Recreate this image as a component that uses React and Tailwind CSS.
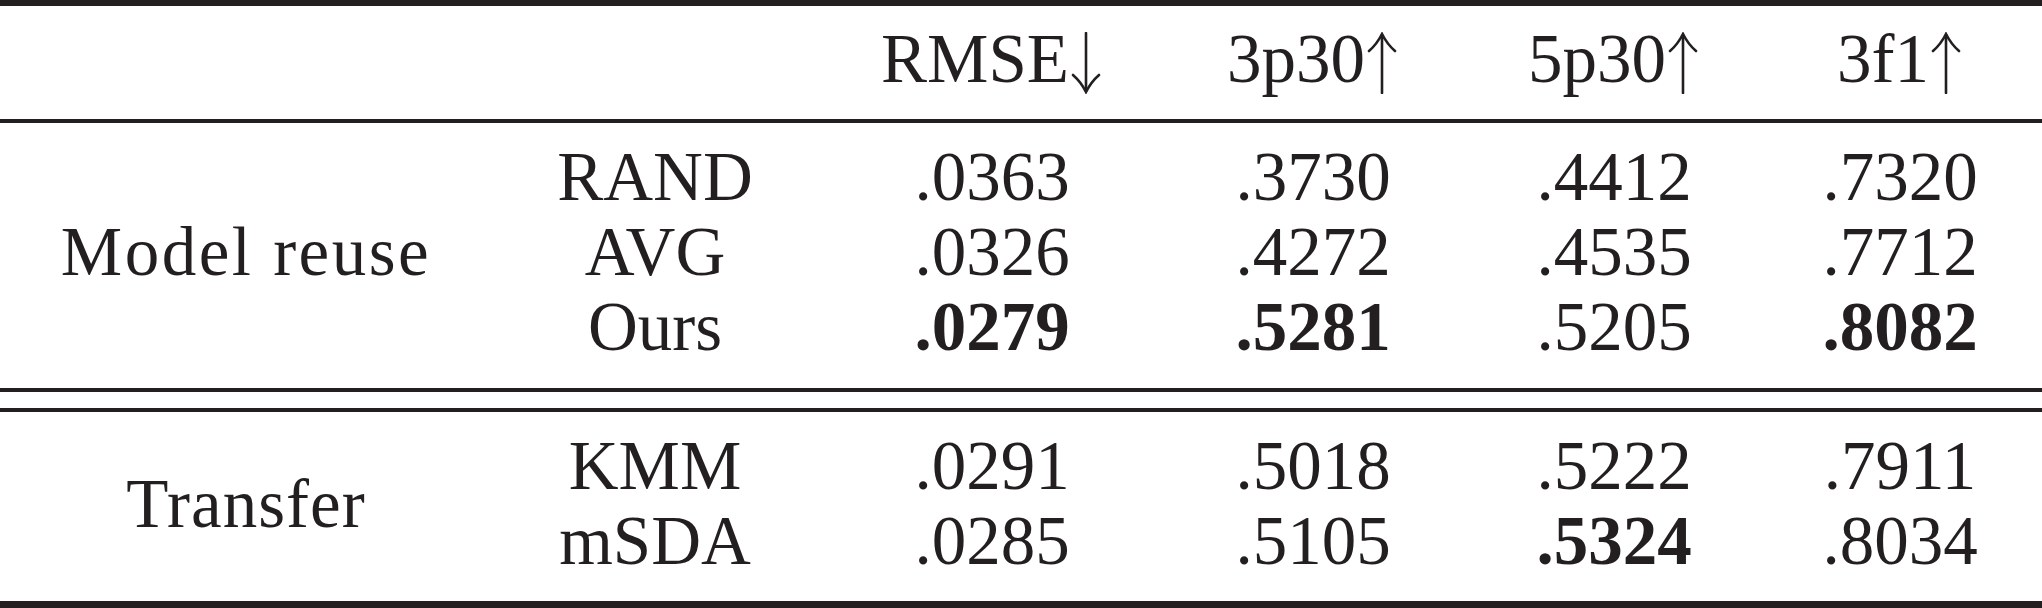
import React from 'react';

const cols = 'grid grid-cols-[492px_326px_348px_294px_308px_264px]';

// math-style arrows as in the LaTeX header
const Arrow = ({ down }) => (
  <svg
    width="34"
    height="62"
    viewBox="0 0 34 62"
    className="inline-block align-[-12px]"
    fill="none"
    stroke="#231f20"
    strokeWidth="2.6"
    strokeLinecap="round"
  >
    <g transform={down ? 'translate(0 62) scale(1 -1)' : undefined}>
      <path d="M17 3 V61" />
      <path d="M4 19 Q12 12 17 2 Q22 12 30 19" />
    </g>
  </svg>
);

const headers = [
  { label: 'RMSE', down: true },
  { label: '3p30', down: false },
  { label: '5p30', down: false },
  { label: '3f1', down: false },
];

const groups = [
  {
    name: 'Model reuse',
    track: 'tracking-[0.036em]',
    rows: [
      { method: 'RAND', values: ['.0363', '.3730', '.4412', '.7320'], bold: [] },
      { method: 'AVG', values: ['.0326', '.4272', '.4535', '.7712'], bold: [] },
      { method: 'Ours', values: ['.0279', '.5281', '.5205', '.8082'], bold: [0, 1, 3] },
    ],
    pad: 'pt-[17px] pb-[23px]',
  },
  {
    name: 'Transfer',
    track: 'tracking-[0.015em]',
    rows: [
      { method: 'KMM', values: ['.0291', '.5018', '.5222', '.7911'], bold: [] },
      { method: 'mSDA', values: ['.0285', '.5105', '.5324', '.8034'], bold: [2] },
    ],
    pad: 'pt-[17px] pb-[22px]',
  },
];

const Rule = ({ h }) => <div className={`${h} w-full bg-[#231f20]`} />;

const Group = ({ group }) => {
  const span = group.rows.length === 3 ? 'row-span-3' : 'row-span-2';
  return (
    <div className={`${cols} ${group.pad}`}>
      <div className={`${span} col-start-1 flex items-center justify-center ${group.track}`}>{group.name}</div>
      {group.rows.map((r, i) => (
        <React.Fragment key={r.method}>
          <div className="col-start-2 text-center" style={{ gridRow: i + 1 }}>{r.method}</div>
          {r.values.map((v, j) => (
            <div
              key={j}
              className={`text-center ${r.bold.includes(j) ? 'font-bold' : ''}`}
              style={{ gridRow: i + 1, gridColumn: j + 3 }}
            >
              {v}
            </div>
          ))}
        </React.Fragment>
      ))}
    </div>
  );
};

export default function App() {
  return (
    <div className="w-[2042px] h-[608px] bg-white text-[#231f20] font-['Liberation_Serif',serif] text-[69px] leading-[75px]">
      <Rule h="h-[6px]" />
      <div className={`${cols} pt-[16px] pb-[22px]`}>
        <div />
        <div />
        {headers.map((h) => (
          <div key={h.label} className="text-center">
            {h.label}
            <Arrow down={h.down} />
          </div>
        ))}
      </div>
      <Rule h="h-[4px]" />
      <Group group={groups[0]} />
      <Rule h="h-[4px]" />
      <div className="h-[16px]" />
      <Rule h="h-[4px]" />
      <Group group={groups[1]} />
      <Rule h="h-[7px]" />
    </div>
  );
}
